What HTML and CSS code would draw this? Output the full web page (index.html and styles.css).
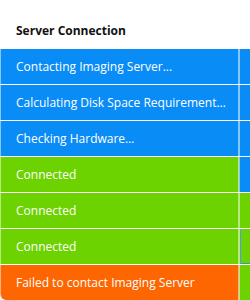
FILE: index.html
```html
<!DOCTYPE html>
<html>
<head>
<meta charset="utf-8">
<link rel="stylesheet" href="styles.css">
</head>
<body>
<div class="panel">
  <div class="header">Server Connection</div>
  <div class="rows">
    <div class="row"><div class="cell main blue">Contacting Imaging Server...</div><div class="cell side blue"></div></div>
    <div class="row"><div class="cell main blue">Calculating Disk Space Requirement…</div><div class="cell side blue"></div></div>
    <div class="row"><div class="cell main blue">Checking Hardware…</div><div class="cell side blue"></div></div>
    <div class="row"><div class="cell main green">Connected</div><div class="cell side blue"></div></div>
    <div class="row"><div class="cell main green">Connected</div><div class="cell side green"></div></div>
    <div class="row"><div class="cell main green">Connected</div><div class="cell side green focus"></div></div>
    <div class="row"><div class="cell main orange last">Failed to contact Imaging Server</div><div class="cell side green"></div></div>
  </div>
</div>
</body>
</html>
```
FILE: styles.css
```css
html, body {
  margin: 0;
  padding: 0;
  background: #ffffff;
  overflow: hidden;
}
body {
  width: 250px;
  height: 300px;
  font-family: "Open Sans", "Liberation Sans", sans-serif;
}
.panel {
  width: 250px;
}
.header {
  height: 49px;
  box-sizing: border-box;
  padding: 22px 0 0 16px;
  font-size: 12px;
  line-height: 18px;
  font-weight: 700;
  color: #111111;
}
.rows {
  display: flex;
  flex-direction: column;
}
.row {
  display: flex;
  height: 36px;
  box-sizing: border-box;
  border-bottom: 1px solid #ffffff;
}
.cell {
  box-sizing: border-box;
  height: 35px;
  border-left: 1px solid rgba(255, 255, 255, 0.5);
  color: #ffffff;
  font-size: 12px;
  line-height: 35px;
  white-space: nowrap;
  overflow: hidden;
}
.main {
  width: 239px;
  flex: none;
  padding-left: 15px;
  border-right: 1px solid rgba(255, 255, 255, 0.5);
}
.side {
  flex: 1;
}
.blue { background-color: #0a8cf7; }
.green { background-color: #6cd200; }
.orange { background-color: #fd6600; }
.last { border-bottom-left-radius: 6px; }
.focus {
  box-shadow: inset 1px 0 0 #4aa0e0, inset 0 -1px 0 #3a9ab0;
}
```
